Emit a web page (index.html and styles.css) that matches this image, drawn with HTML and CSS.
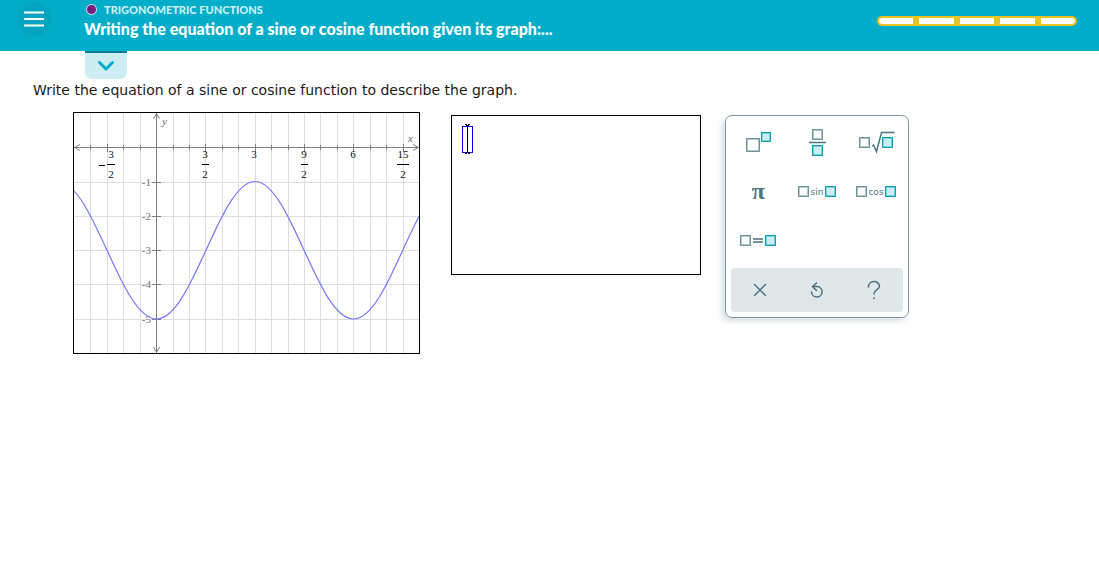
FILE: index.html
```html
<!DOCTYPE html>
<html lang="en">
<head>
    <meta charset="utf-8">
    <title>Trigonometric Functions</title>
    <link rel="stylesheet" href="styles.css">
</head>
<body>
    <header class="topbar">
        <button class="menu-button" aria-label="Menu">
            <svg width="20" height="16" viewBox="0 0 20 16"><path d="M0 1.5h20M0 8h20M0 14.5h20"/></svg>
        </button>
        <div class="heading">
            <div class="topic"><span class="dot"></span>TRIGONOMETRIC FUNCTIONS</div>
            <h1>Writing the equation of a sine or cosine function given its graph:...</h1>
        </div>
        <div class="progress">
            <span></span><span></span><span></span><span></span><span></span>
        </div>
    </header>

    <button class="expand-tab" aria-label="Show more">
        <svg width="18" height="12" viewBox="0 0 18 12"><path d="M2.500 2.500l6.500 6.500 6.500-6.500"/></svg>
    </button>

    <main>
        <p class="question">Write the equation of a sine or cosine function to describe the graph.</p>

        <div class="work">
            <svg class="graph" width="347" height="242" viewBox="0 0 347 242">
                <path class="grid" d="M17.5 0v242M34.5 0v242M50.5 0v242M67.5 0v242M100.5 0v242M116.5 0v242M132.5 0v242M149.5 0v242M165.5 0v242M182.5 0v242M198.5 0v242M215.5 0v242M231.5 0v242M247.5 0v242M264.5 0v242M280.5 0v242M297.5 0v242M313.5 0v242M330.5 0v242"/>
                <path class="grid" d="M0 70.5h347M0 104.5h347M0 138.5h347M0 172.5h347M0 207.5h347"/>

                <!-- axes, ticks and arrow heads -->
                <path class="axis" d="M1 35.5h345M83.5 1v240"/>
                <path class="axis" d="M17.5 33v5M50.5 33v5M67.5 33v5M100.5 33v5M116.5 33v5M149.5 33v5M165.5 33v5M198.5 33v5M215.5 33v5M247.5 33v5M264.5 33v5M297.5 33v5M313.5 33v5"/>
                <path class="axis" d="M34.5 32v8M132.5 32v8M182.5 32v8M231.5 32v8M280.5 32v8M330.5 32v8"/>
                <path class="axis" d="M79 70.5h9M79 104.5h9M79 138.5h9M79 172.5h9M79 207.5h9"/>
                <path class="arrow" d="M7 32.5l-5.5 3 5.5 3M340 32.5l5.5 3-5.5 3M80.5 7l3-5.5 3 5.5M80.5 235l3 5.5 3-5.5"/>

                <g class="axis-name">
                    <text x="89" y="13">y</text>
                    <text x="335" y="30">x</text>
                </g>
                <g class="y-label">
                    <text x="78" y="74">-1</text>
                    <text x="78" y="108">-2</text>
                    <text x="78" y="142">-3</text>
                    <text x="78" y="176">-4</text>
                    <text x="78" y="211">-5</text>
                </g>
                <g class="x-label">
                    <text x="38" y="46">3</text><text x="38" y="66">2</text>
                    <text x="132" y="46">3</text><text x="132" y="66">2</text>
                    <text x="181" y="46">3</text>
                    <text x="231" y="46">9</text><text x="231" y="66">2</text>
                    <text x="280" y="46">6</text>
                    <text x="330" y="46">15</text><text x="330" y="66">2</text>
                </g>
                <path class="bar" d="M26 53.5h6M34 52.5h8M129 52.5h7M228 52.5h7M324 52.5h12"/>

                <path class="curve" d="M-15.5 69.5C20.5 69.5 47.5 207 83.5 207S146.5 69.5 182 69.5S244.5 207 280.5 207S343 69.5 379 69.5"/>
                <rect class="frame" x=".5" y=".5" width="346" height="241"/>
            </svg>

            <div class="answer">
                <input type="text" aria-label="Equation">
                <svg class="caret" width="5" height="30" viewBox="0 0 5 30"><path d="M0 .5h2M3 .5h2M1 1.500h3M2.500 2v26M1 28.500h3M0 29.500h2M3 29.500h2"/></svg>
            </div>

            <div class="palette">
                <div class="symbols">
                    <button aria-label="Exponent">
                        <svg width="40" height="28" viewBox="0 0 40 28"><g class="box"><rect x="9" y="11" width="12" height="12"/><path d="M8.5 10.5h13v13h-13z"/></g><g class="fill"><rect x="24" y="5" width="8" height="8"/><path d="M23.5 4.5h9v9h-9z"/></g></svg>
                    </button>
                    <button aria-label="Fraction">
                        <svg width="40" height="28" viewBox="0 0 40 28"><g class="box"><rect x="16" y="2" width="9" height="9"/><path d="M15.5 1.5h10v10h-10z"/></g><path class="line" d="M12 14.5h17"/><g class="fill"><rect x="16" y="18" width="9" height="9"/><path d="M15.5 17.5h10v10h-10z"/></g></svg>
                    </button>
                    <button aria-label="Root">
                        <svg width="40" height="28" viewBox="0 0 40 28"><g class="box"><rect x="4" y="10" width="9" height="9"/><path d="M3.5 9.5h10v10h-10z"/></g><path class="line" d="M16 18l1.500-1 3 6.500 5-19h13"/><g class="fill"><rect x="27" y="10" width="9" height="9"/><path d="M26.5 9.5h10v10h-10z"/></g></svg>
                    </button>
                    <button class="pi">π</button>
                    <button>
                        <svg width="40" height="28" viewBox="0 0 40 28"><g class="box"><rect x="2" y="10" width="9" height="9"/><path d="M1.5 9.5h10v10h-10z"/></g><text x="20" y="18">sin</text><g class="fill"><rect x="29" y="10" width="9" height="9"/><path d="M28.5 9.5h10v10h-10z"/></g></svg>
                    </button>
                    <button>
                        <svg width="42" height="28" viewBox="0 0 42 28"><g class="box"><rect x="2" y="10" width="9" height="9"/><path d="M1.5 9.5h10v10h-10z"/></g><text x="21" y="18">cos</text><g class="fill"><rect x="31" y="10" width="9" height="9"/><path d="M30.5 9.5h10v10h-10z"/></g></svg>
                    </button>
                    <button aria-label="Equals">
                        <svg width="40" height="28" viewBox="0 0 40 28"><g class="box"><rect x="3" y="10" width="9" height="9"/><path d="M2.5 9.5h10v10h-10z"/></g><path class="line" d="M15 13h10M15 16h10"/><g class="fill"><rect x="28" y="10" width="9" height="9"/><path d="M27.5 9.5h10v10h-10z"/></g></svg>
                    </button>
                </div>
                <div class="actions">
                    <button aria-label="Clear">
                        <svg width="20" height="20" viewBox="0 0 20 20"><path d="M4.5 4.5l11 11M15.5 4.5l-11 11"/></svg>
                    </button>
                    <button aria-label="Undo">
                        <svg width="20" height="20" viewBox="0 0 20 20"><path d="M9.500 3l-4 3.500 4 4M5.500 6.500H10.500a5.300 5.300 0 1 1-6 5.500"/></svg>
                    </button>
                    <button aria-label="Help">
                        <svg width="20" height="20" viewBox="0 0 20 20"><path d="M4.500 7C4.500 3.500 7 1.500 10 1.500s5.500 2 5.500 4.500c0 4-5.500 3.500-5.500 8M10 18v.6"/></svg>
                    </button>
                </div>
            </div>
        </div>
    </main>
</body>
</html>
```

FILE: styles.css
```css
body {
    margin: 0;
    background: #fff;
    font-family: "DejaVu Sans", Verdana, sans-serif;
}
button {
    padding: 0;
    border: none;
    background: none;
    font-family: inherit;
    cursor: pointer;
}
svg {
    display: block;
    fill: none;
}

.topbar {
    display: flex;
    align-items: flex-start;
    height: 51px;
    background: #02adc9;
    color: #fff;
    font-family: Lato, "Open Sans", sans-serif;
}
.menu-button {
    display: flex;
    align-items: center;
    justify-content: center;
    width: 34px;
    height: 34px;
    margin: 2px 33px 0 17px;
    border-radius: 50%;
    background: #04a5c3;
}
.menu-button svg {
    stroke: #fff;
    stroke-width: 2;
    stroke-linecap: round;
}
.heading {
    flex: 1;
}
.topic {
    display: flex;
    align-items: center;
    height: 18px;
    color: #c9f0f5;
    font-size: 11px;
    font-weight: 900;
}
.dot {
    width: 9px;
    height: 9px;
    margin: 0 7px 0 2px;
    border: 1px solid #d8eef5;
    border-radius: 50%;
    background: #7b1b80;
}
h1 {
    margin: 0;
    font-size: 16px;
    font-weight: 900;
    line-height: 22px;
}
.progress {
    display: flex;
    gap: 6px;
    box-sizing: border-box;
    width: 200px;
    height: 10px;
    margin: 16px 22px 0 0;
    border: 2px solid #e9c31f;
    border-radius: 5px;
    background: #e9c31f;
    overflow: hidden;
}
.progress span {
    flex: 1;
    background: #fff;
}
.progress span:first-child {
    border-radius: 3px 0 0 3px;
}
.progress span:last-child {
    border-radius: 0 3px 3px 0;
}

.expand-tab {
    display: flex;
    align-items: center;
    justify-content: center;
    width: 42px;
    height: 28px;
    margin-left: 85px;
    border-top: 2px solid #047f93;
    border-radius: 0 0 7px 7px;
    background: #cceef3;
}
.expand-tab svg {
    stroke: #02adc9;
    stroke-width: 3;
    stroke-linecap: round;
}

.question {
    margin: 0 33px;
    color: #1a1a1a;
    font-size: 14px;
    line-height: 22px;
}
.work {
    display: flex;
    align-items: flex-start;
    margin: 11px 0 0 73px;
}

.graph {
    flex: none;
    margin-right: 31px;
}
.grid {
    stroke: #dedede;
}
.axis,
.arrow {
    stroke: #808080;
}
.bar,
.frame {
    stroke: #000;
}
.curve {
    stroke: #7777ff;
    stroke-width: 1.2;
}
.graph text {
    font-family: "Liberation Serif", "Times New Roman", serif;
    font-size: 11px;
}
.axis-name {
    fill: #666;
    font-style: italic;
}
.y-label {
    fill: #777;
    text-anchor: end;
}
.x-label {
    fill: #111;
    text-anchor: middle;
}

.answer {
    position: relative;
    flex: none;
    box-sizing: border-box;
    width: 250px;
    height: 160px;
    margin: 3px 24px 0 0;
    padding: 10px;
    border: 1px solid #000;
}
.answer input {
    display: block;
    box-sizing: border-box;
    width: 11px;
    height: 27px;
    padding: 0;
    border: 1px solid #00f;
    outline: none;
}
.caret {
    position: absolute;
    top: 8px;
    left: 13px;
    stroke: #000;
}

.palette {
    flex: none;
    box-sizing: border-box;
    width: 184px;
    margin-top: 3px;
    padding: 1px 3px 5px;
    border: 1px solid #7a9ba5;
    border-radius: 7px;
    box-shadow: -3px 3px 6px #d5dfe2;
}
.symbols {
    display: grid;
    grid-template-columns: repeat(3, 1fr);
    grid-auto-rows: 49px;
}
.symbols button,
.actions button {
    display: flex;
    align-items: center;
    justify-content: center;
}
.box rect {
    fill: #fff;
    stroke: #b4c8cc;
    stroke-width: 2;
}
.box path {
    stroke: #6f929b;
}
.fill rect {
    fill: #cceef3;
    stroke: #7fcfdb;
    stroke-width: 2;
}
.fill path {
    stroke: #0a9db6;
}
.line {
    stroke: #4a7480;
    stroke-width: 1.5;
}
.symbols text {
    fill: #4a7480;
    font-size: 9px;
    text-anchor: middle;
}
.symbols .pi {
    color: #4a7480;
    font-family: "Liberation Serif", serif;
    font-size: 24px;
    font-weight: 700;
    line-height: 24px;
}
.actions {
    display: grid;
    grid-template-columns: repeat(3, 1fr);
    height: 44px;
    margin: 4px 2px 0;
    border-radius: 4px;
    background: #dfe7e9;
}
.actions svg {
    stroke: #4a7480;
    stroke-width: 1.5;
    stroke-linecap: round;
}
```
